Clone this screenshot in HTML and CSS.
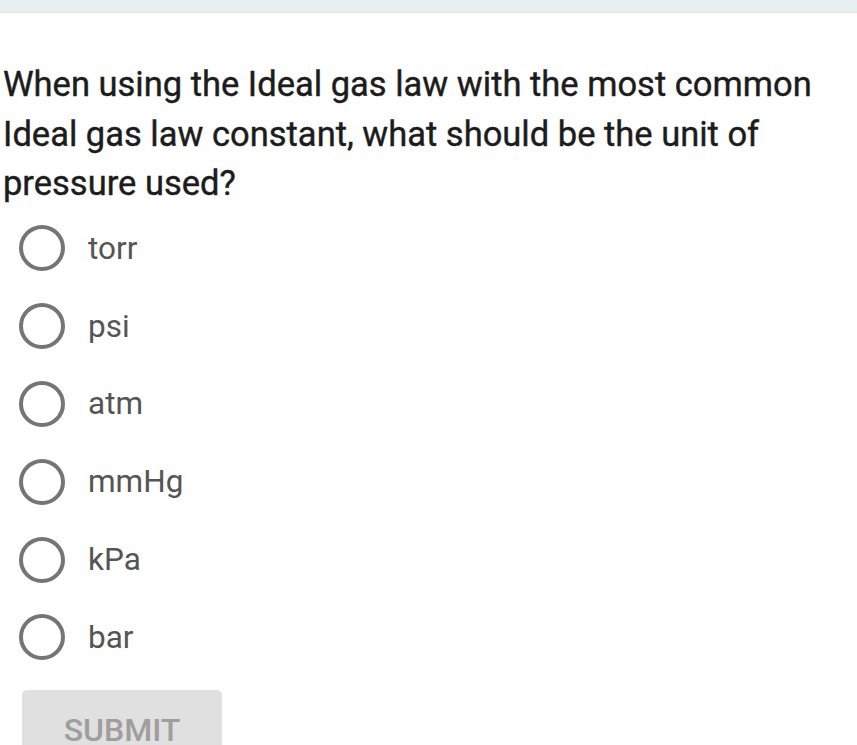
FILE: index.html
```html
<!DOCTYPE html>
<html>
	<head>
		<meta charset="utf-8" />
		<title>Question</title>
		<link rel="stylesheet" href="styles.css">
	</head>
	<body>
		<div class="topbar"></div>
		<div class="question">
			<p class="prompt">When using the Ideal gas law with the most common Ideal gas law constant, what should be the unit of pressure used?</p>
			<ul class="options">
				<li class="option"><span class="radio"></span><span class="label">torr</span></li>
				<li class="option"><span class="radio"></span><span class="label">psi</span></li>
				<li class="option"><span class="radio"></span><span class="label">atm</span></li>
				<li class="option"><span class="radio"></span><span class="label">mmHg</span></li>
				<li class="option"><span class="radio"></span><span class="label">kPa</span></li>
				<li class="option"><span class="radio"></span><span class="label">bar</span></li>
			</ul>
			<button class="submit" disabled>SUBMIT</button>
		</div>
	</body>
</html>
```

FILE: styles.css
```css
body, html {
	margin: 0;
	padding: 0;
	background: #fff;
	font-family: Roboto, "Liberation Sans", sans-serif;
	overflow: hidden;
}

.topbar {
	height: 12px;
	background-color: #e9eef1;
	border-bottom: 1px solid #dfe5e9;
}

.question {
	padding: 0 0 0 3px;
}

.prompt {
	margin: 47px 0 0 0;
	font-size: 34.5px;
	line-height: 49.5px;
	font-weight: 400;
	color: #1c1c1c;
	width: 850px;
	-webkit-text-stroke: 0.4px #1c1c1c;
}

.options {
	list-style: none;
	margin: 0;
	padding: 1px 0 0 0;
}

.option {
	display: flex;
	align-items: center;
	height: 77.8px;
}

.radio {
	width: 38px;
	height: 38px;
	border: 4px solid #757575;
	border-radius: 50%;
	margin-left: 16px;
	flex: none;
}

.label {
	margin-left: 23px;
	font-size: 31.5px;
	color: #555;
}

.submit {
	display: block;
	margin: 14px 0 0 19px;
	width: 200px;
	border: 0;
	border-radius: 5px;
	background-color: #e0e0e0;
	color: #9e9e9e;
	font-family: Roboto, "Liberation Sans", sans-serif;
	font-size: 32px;
	line-height: 32px;
	font-weight: 500;
	padding: 24px 0 30px 0;
	text-align: center;
}
```
